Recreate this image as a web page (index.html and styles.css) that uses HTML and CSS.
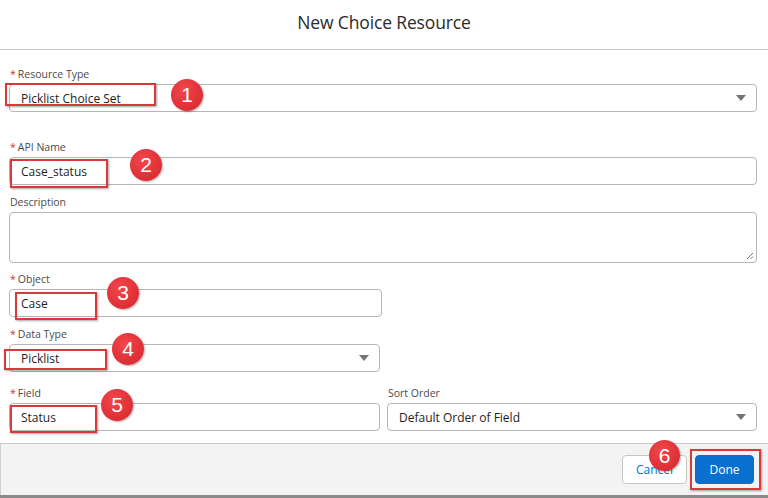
FILE: index.html
```html
<!DOCTYPE html>
<html lang="en">
<head>
<meta charset="utf-8">
<title>New Choice Resource</title>
<link rel="stylesheet" href="styles.css">
</head>
<body>
<div class="modal">
  <header class="modal-header">
    <h2 class="modal-title">New Choice Resource</h2>
  </header>
  <main class="modal-body">
    <div class="field field-resource">
      <label class="field-label"><abbr class="req">*</abbr>Resource Type</label>
      <div class="control">
        <div class="input select"><span class="value">Picklist Choice Set</span><span class="caret"></span></div>
        <span class="mark mark-1"></span>
        <span class="badge badge-1">1</span>
      </div>
    </div>
    <div class="field field-api">
      <label class="field-label"><abbr class="req">*</abbr>API Name</label>
      <div class="control">
        <div class="input"><span class="value">Case_status</span></div>
        <span class="mark mark-2"></span>
        <span class="badge badge-2">2</span>
      </div>
    </div>
    <div class="field field-desc">
      <label class="field-label">Description</label>
      <div class="control">
        <div class="input textarea">
          <svg class="grip" width="8" height="8" viewBox="0 0 8 8"><path d="M7 1 L1 7 M7 4.5 L4.5 7" stroke="#777" stroke-width="1" fill="none"/></svg>
        </div>
      </div>
    </div>
    <div class="grid">
      <div class="field field-object">
        <label class="field-label"><abbr class="req">*</abbr>Object</label>
        <div class="control">
          <div class="input"><span class="value">Case</span></div>
          <span class="mark mark-3"></span>
          <span class="badge badge-3">3</span>
        </div>
      </div>
      <div></div>
      <div class="field field-type">
        <label class="field-label"><abbr class="req">*</abbr>Data Type</label>
        <div class="control">
          <div class="input select"><span class="value">Picklist</span><span class="caret"></span></div>
          <span class="mark mark-4"></span>
          <span class="badge badge-4">4</span>
        </div>
      </div>
      <div></div>
      <div class="field field-field">
        <label class="field-label"><abbr class="req">*</abbr>Field</label>
        <div class="control">
          <div class="input"><span class="value">Status</span></div>
          <span class="mark mark-5"></span>
          <span class="badge badge-5">5</span>
        </div>
      </div>
      <div class="field field-field">
        <label class="field-label">Sort Order</label>
        <div class="control">
          <div class="input select"><span class="value">Default Order of Field</span><span class="caret"></span></div>
        </div>
      </div>
    </div>
  </main>
  <footer class="modal-footer">
    <button class="btn btn-neutral">Cancel</button>
    <span class="btn-wrap">
      <button class="btn btn-brand">Done</button>
      <span class="mark mark-6"></span>
      <span class="badge badge-6">6</span>
    </span>
  </footer>
</div>
</body>
</html>
```
FILE: styles.css
```css
* { box-sizing: border-box; }
html, body { margin: 0; padding: 0; background: #fff; }
body {
  width: 768px;
  height: 498px;
  overflow: hidden;
  font-family: "Open Sans", "Noto Sans", sans-serif;
  color: #080707;
}
.modal {
  height: 498px;
  display: flex;
  flex-direction: column;
  border-bottom: 3px solid #8a8a8a;
}
.modal-header {
  height: 50px;
  border-bottom: 1px solid #c9c9c9;
  display: flex;
  align-items: center;
  justify-content: center;
  padding-bottom: 5px;
}
.modal-title {
  margin: 0;
  font-size: 17.5px;
  font-weight: 400;
  color: #2b2b2b;
  letter-spacing: -0.15px;
}
.modal-body {
  padding: 16px 11px 12px 9px;
  flex: 1;
}
.field-label {
  display: block;
  height: 18px;
  line-height: 17px;
  font-size: 10.5px;
  color: #4a4a48;
  padding-left: 1px;
}
.req {
  color: #c23934;
  text-decoration: none;
  margin-right: 2px;
}
.control { position: relative; }
.input {
  height: 28px;
  border: 1px solid #b8b6b4;
  border-radius: 4px;
  background: #fff;
  display: flex;
  align-items: center;
  padding: 0 11px;
  font-size: 12px;
  color: #1e1e1e;
  position: relative;
}
.select .value { flex: 1; }
.caret {
  width: 0;
  height: 0;
  border-left: 5px solid transparent;
  border-right: 5px solid transparent;
  border-top: 6px solid #747474;
  margin-right: -1px;
}
.textarea { height: 51px; }
.grip { position: absolute; right: 2px; bottom: 2px; }
.field-api { margin-top: 27px; }
.field-desc { margin-top: 9px; }
.grid {
  display: grid;
  grid-template-columns: 371px 1fr;
  column-gap: 7px;
  margin-top: 8px;
}
.field-object .control { margin-right: -2px; }
.field-type { margin-top: 9px; }
.field-field { margin-top: 13px; }
.mark {
  position: absolute;
  border: 2px solid #d8393b;
  box-shadow: 1px 1px 2px rgba(0,0,0,0.35);
  pointer-events: none;
}
.badge {
  position: absolute;
  width: 32px;
  height: 32px;
  border-radius: 50%;
  background: radial-gradient(circle at 40% 35%, #f2474c, #dc2e34 70%);
  color: #fff;
  font-family: "Liberation Sans", Arial, sans-serif;
  font-size: 21px;
  line-height: 32px;
  text-align: center;
  box-shadow: 1px 1px 2px rgba(0,0,0,0.3);
}
.mark-1 { left: -4px; top: -1px; width: 151px; height: 23px; }
.badge-1 { left: 162px; top: -5px; }
.mark-2 { left: 1px; top: 2px; width: 98px; height: 29px; }
.badge-2 { left: 121px; top: -8px; }
.mark-3 { left: 6px; top: 3px; width: 82px; height: 28px; }
.badge-3 { left: 98px; top: -12px; }
.mark-4 { left: -5px; top: 5px; width: 103px; height: 21px; }
.badge-4 { left: 103px; top: -11px; }
.mark-5 { left: 1px; top: 2px; width: 87px; height: 28px; }
.badge-5 { left: 92px; top: -14px; }
.modal-footer {
  border-top: 1px solid #c9c9c9;
  border-left: 1px solid #d0d0d0;
  background: #f3f3f3;
  flex: 1;
  display: flex;
  justify-content: flex-end;
  align-items: flex-start;
  padding: 11px 14px 0 0;
  gap: 8px;
}
.btn {
  height: 29px;
  border-radius: 4px;
  font-family: "Open Sans", "Noto Sans", sans-serif;
  font-size: 12px;
  padding: 0;
  margin: 0;
}
.btn-neutral {
  width: 65px;
  background: #fff;
  border: 1px solid #c9c7c5;
  color: #0070d2;
}
.btn-wrap { position: relative; display: block; }
.btn-brand {
  width: 59px;
  background: #0a70d0;
  border: 1px solid #0070d2;
  color: #fff;
  display: block;
}
.mark-6 { left: -5px; top: -6px; width: 71px; height: 41px; }
.badge-6 { left: -46px; top: -15px; width: 31px; height: 31px; line-height: 31px; }
```
